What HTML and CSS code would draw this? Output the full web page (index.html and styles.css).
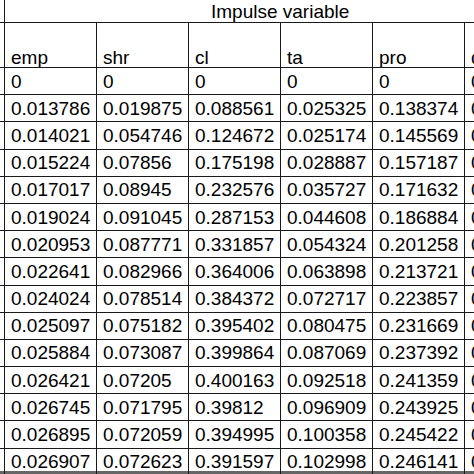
FILE: index.html
```html
<!DOCTYPE html>
<html lang="en">
<head>
    <meta charset="UTF-8">
    <title>Impulse responses</title>
    <link rel="stylesheet" href="styles.css">
</head>
<body>
    <div class="sheet">
        <table class="irf">
            <colgroup>
                <col><col><col><col><col><col><col>
            </colgroup>
            <tr class="group">
                <td></td>
                <td colspan="6" class="group-title">Impulse variable</td>
            </tr>
            <tr class="names">
                <td></td><td>emp</td><td>shr</td><td>cl</td><td>ta</td><td>pro</td><td>d</td>
            </tr>
            <tr><td></td><td>0</td><td>0</td><td>0</td><td>0</td><td>0</td><td>0</td></tr>
            <tr><td></td><td>0.013786</td><td>0.019875</td><td>0.088561</td><td>0.025325</td><td>0.138374</td><td>0.0</td></tr>
            <tr><td></td><td>0.014021</td><td>0.054746</td><td>0.124672</td><td>0.025174</td><td>0.145569</td><td>0.0</td></tr>
            <tr><td></td><td>0.015224</td><td>0.07856</td><td>0.175198</td><td>0.028887</td><td>0.157187</td><td>0.0</td></tr>
            <tr><td></td><td>0.017017</td><td>0.08945</td><td>0.232576</td><td>0.035727</td><td>0.171632</td><td>0.0</td></tr>
            <tr><td></td><td>0.019024</td><td>0.091045</td><td>0.287153</td><td>0.044608</td><td>0.186884</td><td>0.0</td></tr>
            <tr><td></td><td>0.020953</td><td>0.087771</td><td>0.331857</td><td>0.054324</td><td>0.201258</td><td>0.0</td></tr>
            <tr><td></td><td>0.022641</td><td>0.082966</td><td>0.364006</td><td>0.063898</td><td>0.213721</td><td>0.0</td></tr>
            <tr><td></td><td>0.024024</td><td>0.078514</td><td>0.384372</td><td>0.072717</td><td>0.223857</td><td>0.0</td></tr>
            <tr><td></td><td>0.025097</td><td>0.075182</td><td>0.395402</td><td>0.080475</td><td>0.231669</td><td>0.0</td></tr>
            <tr><td></td><td>0.025884</td><td>0.073087</td><td>0.399864</td><td>0.087069</td><td>0.237392</td><td>0.0</td></tr>
            <tr><td></td><td>0.026421</td><td>0.07205</td><td>0.400163</td><td>0.092518</td><td>0.241359</td><td>0.0</td></tr>
            <tr><td></td><td>0.026745</td><td>0.071795</td><td>0.39812</td><td>0.096909</td><td>0.243925</td><td>0.0</td></tr>
            <tr><td></td><td>0.026895</td><td>0.072059</td><td>0.394995</td><td>0.100358</td><td>0.245422</td><td>0.0</td></tr>
            <tr><td></td><td>0.026907</td><td>0.072623</td><td>0.391597</td><td>0.102998</td><td>0.246141</td><td>0.0</td></tr>
        </table>
    </div>
</body>
</html>
```

FILE: styles.css
```css
html, body {
    margin: 0;
    overflow: hidden;
    background-color: #fff;
}

body {
    font-family: "Liberation Sans", Arial, sans-serif;
    color: #000;
}

/* recorte de la hoja */
.sheet {
    width: 474px;
    height: 474px;
    overflow: hidden;
    box-shadow: inset 0 -3px 0 #666;
}

.irf {
    border-collapse: collapse;
    table-layout: fixed;
    width: 644px;
    margin-left: -88px;
    font-size: 19px;
}

.irf col {
    width: 92px;
}

.irf td {
    border: 1px solid #1a1a1a;
    padding: 0 0 0 6px;
    height: 26.2px;
    line-height: 19px;
    vertical-align: middle;
    white-space: nowrap;
    overflow: hidden;
}

/* fila del titulo */
.group td {
    height: 21px;
    border-top: none;
    vertical-align: bottom;
    padding-bottom: 1px;
}

.group-title {
    padding-left: 206px !important;
    border-right: none !important;
}

.names td {
    height: 44px;
    vertical-align: bottom;
    padding-bottom: 0;
}
```
